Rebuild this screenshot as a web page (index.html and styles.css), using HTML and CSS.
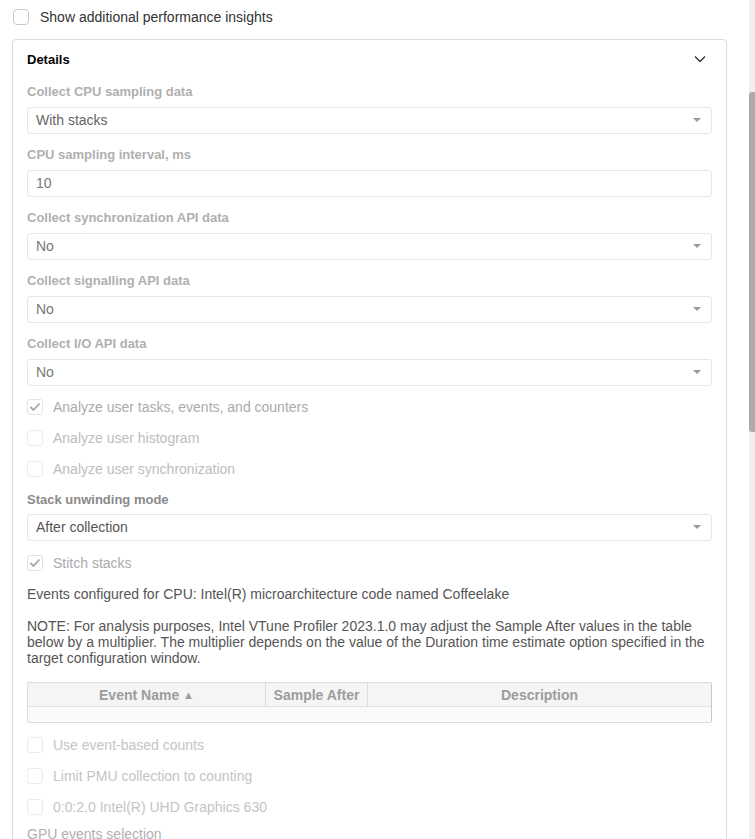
FILE: index.html
```html
<!DOCTYPE html>
<html lang="en">
<head>
<meta charset="utf-8">
<title>Details</title>
<link rel="stylesheet" href="styles.css">
</head>
<body>
<div class="page">
  <label class="top-check">
    <span class="box box-top"></span>
    <span class="top-text">Show additional performance insights</span>
  </label>

  <section class="card">
    <div class="card-head">
      <span class="card-title">Details</span>
      <svg class="chevron" width="12" height="8" viewBox="0 0 12 8"><path d="M1 1.5 L6 6.5 L11 1.5" fill="none" stroke="#333" stroke-width="1.4"/></svg>
    </div>

    <div class="field">
      <div class="flabel">Collect CPU sampling data</div>
      <div class="select"><span class="val v1">With stacks</span><span class="caret"></span></div>
    </div>
    <div class="field">
      <div class="flabel">CPU sampling interval, ms</div>
      <div class="select"><span class="val v2">10</span></div>
    </div>
    <div class="field">
      <div class="flabel">Collect synchronization API data</div>
      <div class="select"><span class="val v2">No</span><span class="caret"></span></div>
    </div>
    <div class="field">
      <div class="flabel">Collect signalling API data</div>
      <div class="select"><span class="val v2">No</span><span class="caret"></span></div>
    </div>
    <div class="field field-last">
      <div class="flabel">Collect I/O API data</div>
      <div class="select"><span class="val v2">No</span><span class="caret"></span></div>
    </div>

    <div class="checks">
      <div class="crow"><span class="box box-checked"><svg width="12" height="10" viewBox="0 0 12 10"><path d="M1.5 5 L4.5 8 L10.5 1.5" fill="none" stroke="#a8a8a8" stroke-width="1.8"/></svg></span><span class="ctext c-on">Analyze user tasks, events, and counters</span></div>
      <div class="crow"><span class="box box-dis"></span><span class="ctext">Analyze user histogram</span></div>
      <div class="crow"><span class="box box-dis"></span><span class="ctext">Analyze user synchronization</span></div>
    </div>

    <div class="field field-stack">
      <div class="flabel flabel-dark">Stack unwinding mode</div>
      <div class="select"><span class="val v3">After collection</span><span class="caret"></span></div>
    </div>

    <div class="checks checks-stitch">
      <div class="crow"><span class="box box-checked"><svg width="12" height="10" viewBox="0 0 12 10"><path d="M1.5 5 L4.5 8 L10.5 1.5" fill="none" stroke="#a8a8a8" stroke-width="1.8"/></svg></span><span class="ctext c-on">Stitch stacks</span></div>
    </div>

    <p class="events">Events configured for CPU: Intel(R) microarchitecture code named Coffeelake</p>
    <p class="note">NOTE: For analysis purposes, Intel VTune Profiler 2023.1.0 may adjust the Sample After values in the table below by a multiplier. The multiplier depends on the value of the Duration time estimate option specified in the target configuration window.</p>

    <div class="table">
      <div class="thead">
        <div class="th th-name">Event Name <span class="sort">&#9650;</span></div>
        <div class="th th-after">Sample After</div>
        <div class="th th-desc">Description</div>
      </div>
      <div class="tbody"></div>
    </div>

    <div class="checks checks-bottom">
      <div class="crow"><span class="box box-dis"></span><span class="ctext c-light">Use event-based counts</span></div>
      <div class="crow"><span class="box box-dis"></span><span class="ctext c-light">Limit PMU collection to counting</span></div>
      <div class="crow"><span class="box box-dis"></span><span class="ctext c-light">0:0:2.0 Intel(R) UHD Graphics 630</span></div>
    </div>

    <div class="flabel gpu">GPU events selection</div>
  </section>
</div>
<div class="scrollbar"><div class="thumb"></div></div>
</body>
</html>
```

FILE: styles.css
```css
html, body {
  margin: 0;
  padding: 0;
  background: #fff;
  overflow: hidden;
  height: 839px;
}
body {
  font-family: "Liberation Sans", Arial, sans-serif;
  font-size: 14px;
  color: #333;
}
.page {
  padding: 9px 28px 0 12px;
}
.top-check {
  display: flex;
  align-items: center;
  height: 16px;
  margin-left: 1px;
  margin-bottom: 14px;
}
.box {
  box-sizing: border-box;
  width: 16px;
  height: 16px;
  border-radius: 3px;
  flex: none;
  display: flex;
  align-items: center;
  justify-content: center;
}
.box-top {
  border: 1px solid #c8c8c8;
  border-radius: 4px;
}
.top-text {
  margin-left: 11px;
  color: #333;
  font-size: 14px;
}
.card {
  border: 1px solid #dcdcdc;
  border-radius: 4px;
  padding: 0 14px 0 14px;
  height: 820px;
  box-sizing: border-box;
}
.card-head {
  display: flex;
  align-items: center;
  justify-content: space-between;
  padding: 11px 6px 17px 0;
  height: 16px;
}
.card-title {
  font-weight: bold;
  font-size: 13px;
  color: #000;
}
.field {
  margin-bottom: 13px;
}
.field-last {
  margin-bottom: 5px;
}
.flabel {
  font-size: 13px;
  font-weight: bold;
  color: #b0b0b0;
  line-height: 16px;
  height: 16px;
  margin-bottom: 7px;
}
.flabel-dark {
  color: #8a8a8a;
  margin-bottom: 6px;
}
.select {
  box-sizing: border-box;
  height: 27px;
  border: 1px solid #e6e6e6;
  border-radius: 3px;
  display: flex;
  align-items: center;
  justify-content: space-between;
  padding: 0 8px 1px 8px;
}
.val {
  font-size: 14px;
}
.v1 { color: #666; }
.v2 { color: #777; }
.v3 { color: #555; }
.caret {
  width: 0;
  height: 0;
  border-left: 4px solid transparent;
  border-right: 4px solid transparent;
  border-top: 4px solid #9a9a9a;
  margin-right: 2px;
}
.checks {
  display: flex;
  flex-direction: column;
}
.crow {
  height: 31px;
  display: flex;
  align-items: center;
}
.box-dis {
  border: 1px solid #ececec;
}
.box-checked {
  border: 1px solid #e2e2e2;
}
.ctext {
  margin-left: 10px;
  color: #bdbdbd;
  font-size: 14px;
}
.c-on {
  color: #ababab;
}
.c-light {
  color: #c4c4c4;
}
.field-stack {
  margin-top: 8px;
  margin-bottom: 6px;
}
.events {
  margin: 8px 0 0 0;
  line-height: 16px;
  color: #555;
}
.note {
  margin: 16px 0 0 0;
  line-height: 16px;
  color: #555;
}
.table {
  margin-top: 16px;
  border: 1px solid #dcdcdc;
  border-right-color: #c8c8c8;
  border-radius: 2px;
}
.thead {
  display: grid;
  grid-template-columns: 238px 102px 1fr;
  height: 23px;
  background: #f5f5f5;
  border-bottom: 1px solid #e2e2e2;
  overflow: hidden;
}
.th {
  font-weight: bold;
  color: #9c9c9c;
  text-align: center;
  line-height: 25px;
  height: 23px;
  overflow: hidden;
  font-size: 14px;
}
.th-name, .th-after {
  border-right: 1px solid #dcdcdc;
}
.sort {
  font-size: 11px;
  vertical-align: 1px;
  color: #9c9c9c;
}
.tbody {
  height: 15px;
  background: #fafafa;
}
.checks-bottom {
  margin-top: 6px;
}
.gpu {
  margin-top: 4px;
  color: #b0b0b0;
  font-weight: normal;
  font-size: 14px;
}
.scrollbar {
  position: fixed;
  top: 0;
  right: 0;
  width: 6px;
  height: 839px;
  background: #efefef;
}
.thumb {
  position: absolute;
  top: 92px;
  left: 0;
  width: 6px;
  height: 340px;
  background: #ababab;
  border-radius: 3px 0 0 3px;
}
```
